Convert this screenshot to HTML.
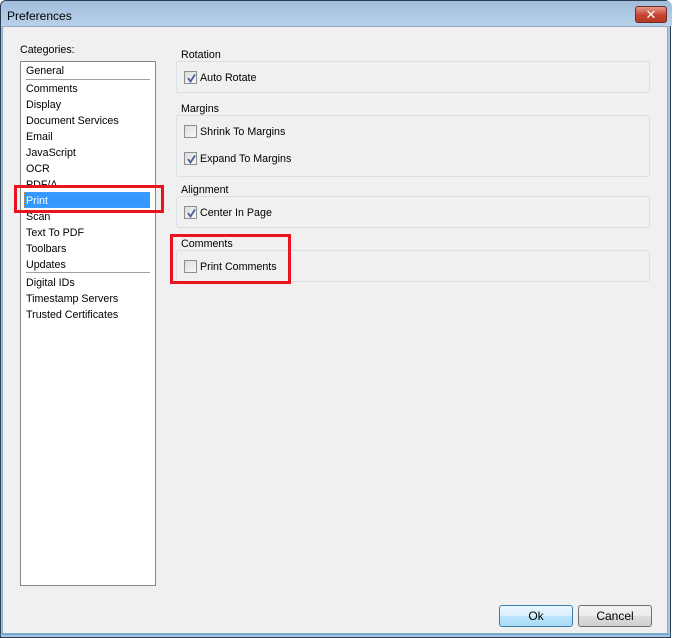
<!DOCTYPE html>
<html><head><style>
*{margin:0;padding:0;box-sizing:border-box}
body{width:673px;height:638px;background:#fff;font-family:"Liberation Sans","DejaVu Sans",sans-serif;font-size:11px;color:#000;position:relative;overflow:hidden}
.win{position:absolute;left:0;top:0;width:671px;height:638px;border:1px solid #2a3d52;border-radius:6px 6px 0 0;background:#a9c3de;}
.title{position:absolute;left:1px;top:1px;right:1px;height:25px;background:linear-gradient(#a2bddb,#b9d1ea);border-radius:5px 5px 0 0}
.title span{position:absolute;left:6px;top:8px;font-size:12px;color:#000}
.close{position:absolute;left:635px;top:6px;width:32px;height:17px;border:1px solid #6b2b26;border-radius:3px;background:linear-gradient(#e59a8c,#c5432f 55%,#b73a26);color:#fff;font-weight:bold;font-size:13px;text-align:center;line-height:15px}
.client{position:absolute;left:2px;top:26px;width:666px;height:608px;background:#f0f0f0;border:1px solid #8da9c6}
.bot{position:absolute;left:0;top:634px;width:671px;height:1px;background:#62a8d8}
.a{position:absolute;white-space:nowrap;margin-top:1px;font-size:10.7px}
.list{position:absolute;left:20px;top:61px;width:136px;height:525px;background:#fff;border:1px solid #828790}
.sep{position:absolute;height:1px;background:#a0a0a0;left:26px;width:124px}
.sel{position:absolute;left:24px;top:192px;width:126px;height:16px;background:#3399ff;border:1px dotted #d08030}
.red{position:absolute;border:3px solid #e8141e}
.grp{position:absolute;left:176px;width:474px;border:1px solid #d5dfe5;border-radius:3px}
.cb{position:absolute;left:184px;width:13px;height:13px;border:1px solid #8f8f8f;background:linear-gradient(135deg,#ddd,#f8f8f8)}
.cb svg{position:absolute;left:1px;top:1px}
.btn{position:absolute;top:605px;width:74px;height:22px;border:1px solid #707070;border-radius:3px;background:linear-gradient(#f2f2f2,#ebebeb 50%,#dddddd 50%,#cfcfcf);text-align:center;line-height:20px;font-size:12px}
</style></head><body>
<div class="win"></div>
<div class="title"><span>Preferences</span></div>
<div class="close">✕</div>
<div class="client"></div>
<div class="bot"></div>

<div class="a" style="left:20px;top:43px">Categories:</div>
<div class="list"></div>
<div class="sel"></div>
<div class="a" style="left:26px;top:64px">General</div>
<div class="sep" style="top:79px"></div>
<div class="a" style="left:26px;top:82px">Comments</div>
<div class="a" style="left:26px;top:98px">Display</div>
<div class="a" style="left:26px;top:114px">Document Services</div>
<div class="a" style="left:26px;top:130px">Email</div>
<div class="a" style="left:26px;top:146px">JavaScript</div>
<div class="a" style="left:26px;top:162px">OCR</div>
<div class="a" style="left:26px;top:178px">PDF/A</div>
<div class="a" style="left:26px;top:194px;color:#fff">Print</div>
<div class="a" style="left:26px;top:210px">Scan</div>
<div class="a" style="left:26px;top:226px">Text To PDF</div>
<div class="a" style="left:26px;top:242px">Toolbars</div>
<div class="a" style="left:26px;top:258px">Updates</div>
<div class="sep" style="top:272px"></div>
<div class="a" style="left:26px;top:276px">Digital IDs</div>
<div class="a" style="left:26px;top:292px">Timestamp Servers</div>
<div class="a" style="left:26px;top:308px">Trusted Certificates</div>
<div class="red" style="left:14px;top:185px;width:150px;height:28px"></div>

<div class="grp" style="top:61px;height:32px"></div>
<div class="grp" style="top:115px;height:62px"></div>
<div class="grp" style="top:196px;height:32px"></div>
<div class="grp" style="top:250px;height:32px"></div>
<div class="a" style="left:181px;top:48px;background:#f0f0f0;padding-right:2px">Rotation</div>
<div class="a" style="left:181px;top:102px;background:#f0f0f0;padding-right:2px">Margins</div>
<div class="a" style="left:181px;top:183px;background:#f0f0f0;padding-right:2px">Alignment</div>
<div class="a" style="left:181px;top:237px;background:#f0f0f0;padding-right:2px">Comments</div>

<div class="cb" style="top:71px"><svg width="11" height="11"><path d="M2 5 L4.5 8.5 L9 1.5" stroke="#4a5f97" stroke-width="1.8" fill="none"/></svg></div>
<div class="a" style="left:200px;top:71px">Auto Rotate</div>
<div class="cb" style="top:125px"></div>
<div class="a" style="left:200px;top:125px">Shrink To Margins</div>
<div class="cb" style="top:152px"><svg width="11" height="11"><path d="M2 5 L4.5 8.5 L9 1.5" stroke="#4a5f97" stroke-width="1.8" fill="none"/></svg></div>
<div class="a" style="left:200px;top:152px">Expand To Margins</div>
<div class="cb" style="top:206px"><svg width="11" height="11"><path d="M2 5 L4.5 8.5 L9 1.5" stroke="#4a5f97" stroke-width="1.8" fill="none"/></svg></div>
<div class="a" style="left:200px;top:206px">Center In Page</div>
<div class="cb" style="top:260px"></div>
<div class="a" style="left:200px;top:260px">Print Comments</div>
<div class="red" style="left:170px;top:234px;width:121px;height:50px"></div>

<div class="btn" style="left:499px;border-color:#3c7fb1;background:linear-gradient(#eaf6fd,#d9f0fc 50%,#bee6fd 50%,#a7d9f5)">Ok</div>
<div class="btn" style="left:578px">Cancel</div>
</body></html>
